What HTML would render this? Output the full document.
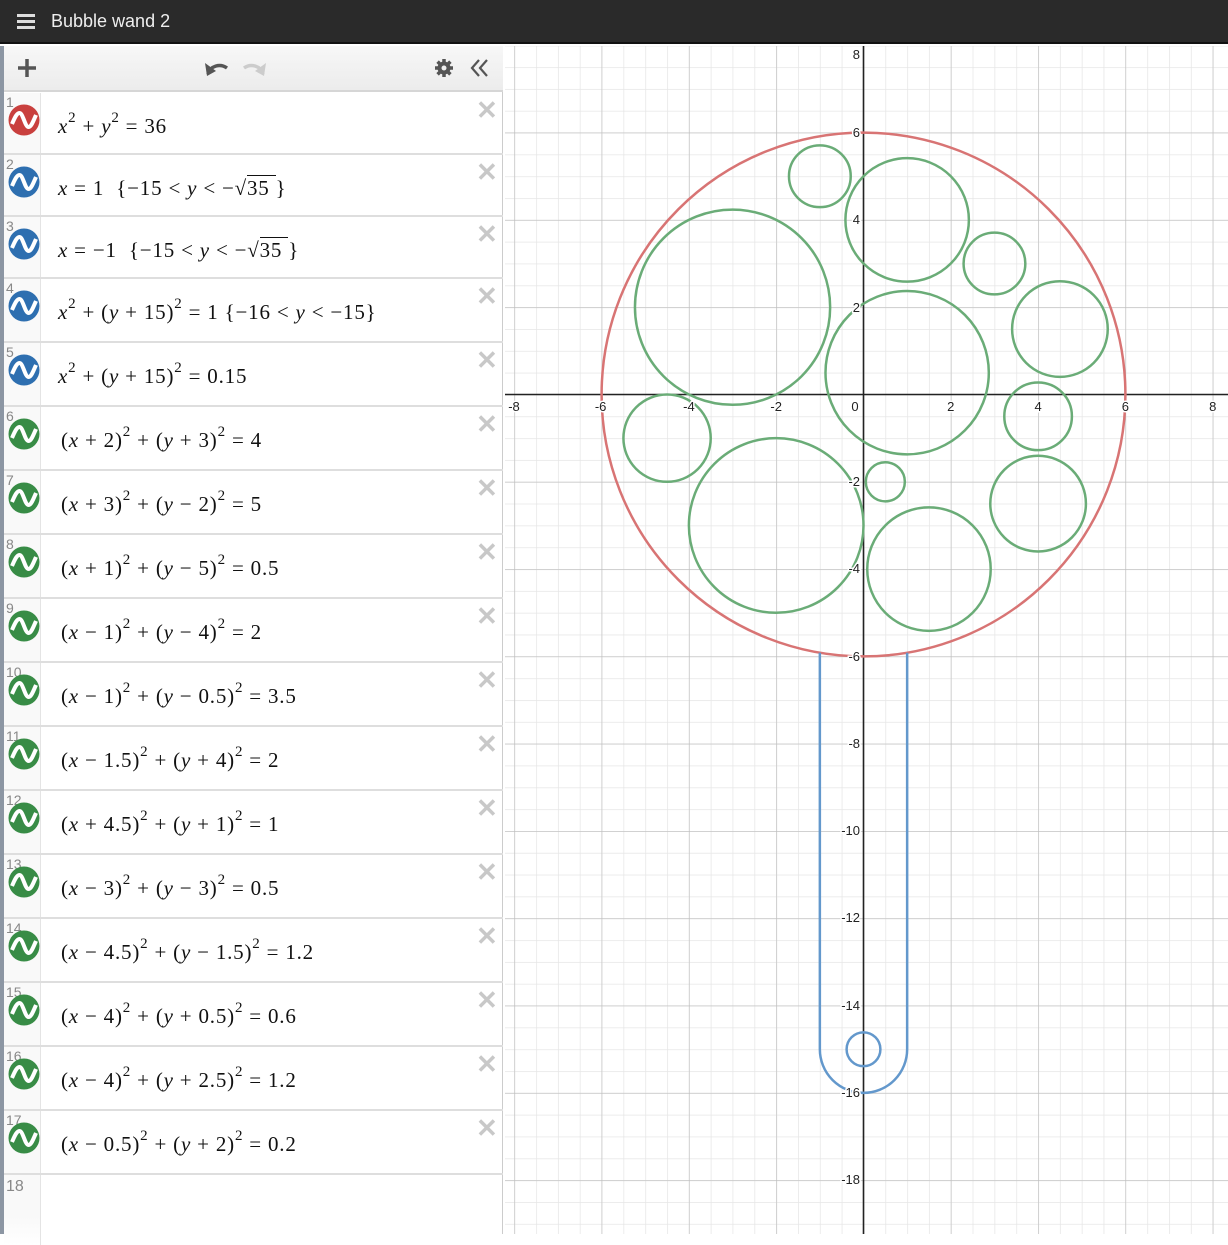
<!DOCTYPE html>
<html><head><meta charset="utf-8"><style>
*{margin:0;padding:0;box-sizing:border-box}
body{width:1228px;height:1234px;overflow:hidden;background:#fff;position:relative;font-family:"Liberation Sans",sans-serif}
#top{position:absolute;left:0;top:0;width:1228px;height:44px;background:#2a2a2a;border-bottom:2px solid #111}
#top .t{position:absolute;left:51px;top:11px;color:#eee;font-size:18px}
#top .hb{position:absolute;left:17px;top:14px;width:18px;height:3px;background:#ddd;box-shadow:0 6px 0 #ddd,0 12px 0 #ddd}
#strip{position:absolute;left:0;top:46px;width:4px;height:1188px;background:#8c96a3}
#panel{position:absolute;left:4px;top:46px;width:499px;height:1188px;background:#fff;border-right:1px solid #ccc}
#tool{position:absolute;left:0;top:0;width:499px;height:46px;background:linear-gradient(#f7f7f7,#ececec);border-bottom:2px solid #d6d6d6}
.row{position:absolute;left:0;width:499px;border-bottom:2px solid #dedede}
.ic{position:absolute;left:0;top:0;width:37px;height:100%;background:#f9f9f9;border-right:1px solid #e4e4e4}
.num{position:absolute;left:2px;top:1px;font-size:14px;color:#888}
.ico{position:absolute;left:4px;top:11px}
.m{position:absolute;top:21px;font-family:"Liberation Serif",serif;font-size:21px;letter-spacing:0.8px;color:#111;white-space:nowrap}
.m i{font-style:italic}
.m sup{font-size:15px;vertical-align:11px;line-height:0}
.x{position:absolute;left:472px;top:4px;color:#c8c8c8;font-size:26px;font-weight:bold;line-height:1}
</style></head><body>
<svg width="1228" height="1234" style="position:absolute;left:0;top:0">
<defs>
<pattern id="mn" x="863.5" y="394.5" width="21.825" height="21.825" patternUnits="userSpaceOnUse"><path d="M0 0V21.825M0 0H21.825" stroke="#e6e6e6" stroke-width="1.5" fill="none"/></pattern>
<pattern id="mj" x="863.5" y="394.5" width="87.3" height="87.3" patternUnits="userSpaceOnUse"><path d="M0 0V87.3M0 0H87.3" stroke="#bdbdbd" stroke-width="1.2" fill="none"/></pattern>
</defs>
<rect x="505" y="46" width="723" height="1188" fill="url(#mn)"/>
<rect x="505" y="46" width="723" height="1188" fill="url(#mj)"/>
<line x1="863.5" y1="46" x2="863.5" y2="1234" stroke="#222" stroke-width="1.6"/>
<line x1="505" y1="394.5" x2="1228" y2="394.5" stroke="#222" stroke-width="1.6"/>
<g fill="none" stroke-width="2.5">
<circle cx="863.5" cy="394.5" r="261.9" stroke="#d87474"/>
<g stroke="#6aac77">
<circle cx="776.2" cy="525.45" r="87.3"/>
<circle cx="732.55" cy="307.2" r="97.6"/>
<circle cx="819.85" cy="176.25" r="30.87"/>
<circle cx="907.15" cy="219.9" r="61.73"/>
<circle cx="907.15" cy="372.675" r="81.66"/>
<circle cx="928.975" cy="569.1" r="61.73"/>
<circle cx="667.075" cy="438.15" r="43.65"/>
<circle cx="994.45" cy="263.55" r="30.87"/>
<circle cx="1059.925" cy="329.025" r="47.82"/>
<circle cx="1038.1" cy="416.325" r="33.81"/>
<circle cx="1038.1" cy="503.625" r="47.82"/>
<circle cx="885.325" cy="481.8" r="19.52"/>
</g>
<g stroke="#6398cc">
<path d="M819.85 652.7 L819.85 1049.25 A43.65 43.65 0 0 0 907.15 1049.25 L907.15 652.7"/>
<circle cx="863.5" cy="1049.25" r="16.9"/>
</g>
</g>
<g font-family="Liberation Sans,sans-serif" font-size="13" fill="#222" stroke="#fff" stroke-width="3" paint-order="stroke" text-anchor="middle">
<text x="514" y="411">-8</text><text x="600.6" y="411">-6</text><text x="688.9" y="411">-4</text><text x="776.2" y="411">-2</text><text x="855" y="411">0</text><text x="950.8" y="411">2</text><text x="1038.1" y="411">4</text><text x="1125.4" y="411">6</text><text x="1212.7" y="411">8</text>
</g>
<g font-family="Liberation Sans,sans-serif" font-size="13" fill="#222" stroke="#fff" stroke-width="3" paint-order="stroke" text-anchor="end">
<text x="860" y="59">8</text><text x="860" y="137">6</text><text x="860" y="224">4</text><text x="860" y="312">2</text><text x="860" y="486">-2</text><text x="860" y="573">-4</text><text x="860" y="661">-6</text><text x="860" y="748">-8</text><text x="860" y="835">-10</text><text x="860" y="922">-12</text><text x="860" y="1010">-14</text><text x="860" y="1097">-16</text><text x="860" y="1184">-18</text>
</g>
</svg>
<div id="top"><div class="hb"></div><div class="t">Bubble wand 2</div></div>
<div id="strip"></div>
<div id="panel">
<div id="tool">
<svg width="499" height="46" style="position:absolute;left:0;top:0">
<path d="M23 13V31M14 22H32" stroke="#555" stroke-width="3.5"/>
<path d="M204 28 C206 20 216 17 223 22" stroke="#555" stroke-width="3.5" fill="none"/><path d="M201 17 L203 30 L212 25Z" fill="#555"/>
<path d="M259 28 C257 20 247 17 240 22" stroke="#ccc" stroke-width="3.5" fill="none"/><path d="M262 17 L260 30 L251 25Z" fill="#ccc"/>
<g transform="translate(440,22)" fill="#555"><circle r="6.5"/><g stroke="#555" stroke-width="3.5"><path d="M0 -9V9M-9 0H9M-6.4 -6.4L6.4 6.4M-6.4 6.4L6.4 -6.4"/></g><circle r="2.5" fill="#f0f0f0"/></g>
<path d="M475 14 L468 22 L475 30M483 14 L476 22 L483 30" stroke="#555" stroke-width="2.2" fill="none"/>
</svg>
</div>
</div>
<div style="position:absolute;left:4px;top:93px;width:499px">
<div class="row" style="top:0;height:62px"><div class="ic"></div><div class="num">1</div><svg class="ico" width="32" height="32"><circle cx="16" cy="16" r="15.5" fill="#c9403e"/><path d="M4 20 C7 13 9 9 11.5 9 C15 9 17 23 20.5 23 C23 23 25 18 28 11" stroke="#fff" stroke-width="4" fill="none"/></svg><div class="m" style="left:54px"><i>x</i><sup>2</sup> + <i>y</i><sup>2</sup> = 36</div><div class="x">✕</div></div>
<div class="row" style="top:62px;height:62px"><div class="ic"></div><div class="num">2</div><svg class="ico" width="32" height="32"><circle cx="16" cy="16" r="15.5" fill="#2e6fb0"/><path d="M4 20 C7 13 9 9 11.5 9 C15 9 17 23 20.5 23 C23 23 25 18 28 11" stroke="#fff" stroke-width="4" fill="none"/></svg><div class="m" style="left:54px"><i>x</i> = 1 &nbsp;{−15 &lt; <i>y</i> &lt; −√<span style="border-top:1.5px solid #111">35 </span>}</div><div class="x">✕</div></div>
<div class="row" style="top:124px;height:62px"><div class="ic"></div><div class="num">3</div><svg class="ico" width="32" height="32"><circle cx="16" cy="16" r="15.5" fill="#2e6fb0"/><path d="M4 20 C7 13 9 9 11.5 9 C15 9 17 23 20.5 23 C23 23 25 18 28 11" stroke="#fff" stroke-width="4" fill="none"/></svg><div class="m" style="left:54px"><i>x</i> = −1 &nbsp;{−15 &lt; <i>y</i> &lt; −√<span style="border-top:1.5px solid #111">35 </span>}</div><div class="x">✕</div></div>
<div class="row" style="top:186px;height:64px"><div class="ic"></div><div class="num">4</div><svg class="ico" width="32" height="32"><circle cx="16" cy="16" r="15.5" fill="#2e6fb0"/><path d="M4 20 C7 13 9 9 11.5 9 C15 9 17 23 20.5 23 C23 23 25 18 28 11" stroke="#fff" stroke-width="4" fill="none"/></svg><div class="m" style="left:54px"><i>x</i><sup>2</sup> + (<i>y</i> + 15)<sup>2</sup> = 1 {−16 &lt; <i>y</i> &lt; −15}</div><div class="x">✕</div></div>
<div class="row" style="top:250px;height:64px"><div class="ic"></div><div class="num">5</div><svg class="ico" width="32" height="32"><circle cx="16" cy="16" r="15.5" fill="#2e6fb0"/><path d="M4 20 C7 13 9 9 11.5 9 C15 9 17 23 20.5 23 C23 23 25 18 28 11" stroke="#fff" stroke-width="4" fill="none"/></svg><div class="m" style="left:54px"><i>x</i><sup>2</sup> + (<i>y</i> + 15)<sup>2</sup> = 0.15</div><div class="x">✕</div></div>
<div class="row" style="top:314px;height:64px"><div class="ic"></div><div class="num">6</div><svg class="ico" width="32" height="32"><circle cx="16" cy="16" r="15.5" fill="#388c46"/><path d="M4 20 C7 13 9 9 11.5 9 C15 9 17 23 20.5 23 C23 23 25 18 28 11" stroke="#fff" stroke-width="4" fill="none"/></svg><div class="m" style="left:57px">(<i>x</i> + 2)<sup>2</sup> + (<i>y</i> + 3)<sup>2</sup> = 4</div><div class="x">✕</div></div>
<div class="row" style="top:378px;height:64px"><div class="ic"></div><div class="num">7</div><svg class="ico" width="32" height="32"><circle cx="16" cy="16" r="15.5" fill="#388c46"/><path d="M4 20 C7 13 9 9 11.5 9 C15 9 17 23 20.5 23 C23 23 25 18 28 11" stroke="#fff" stroke-width="4" fill="none"/></svg><div class="m" style="left:57px">(<i>x</i> + 3)<sup>2</sup> + (<i>y</i> − 2)<sup>2</sup> = 5</div><div class="x">✕</div></div>
<div class="row" style="top:442px;height:64px"><div class="ic"></div><div class="num">8</div><svg class="ico" width="32" height="32"><circle cx="16" cy="16" r="15.5" fill="#388c46"/><path d="M4 20 C7 13 9 9 11.5 9 C15 9 17 23 20.5 23 C23 23 25 18 28 11" stroke="#fff" stroke-width="4" fill="none"/></svg><div class="m" style="left:57px">(<i>x</i> + 1)<sup>2</sup> + (<i>y</i> − 5)<sup>2</sup> = 0.5</div><div class="x">✕</div></div>
<div class="row" style="top:506px;height:64px"><div class="ic"></div><div class="num">9</div><svg class="ico" width="32" height="32"><circle cx="16" cy="16" r="15.5" fill="#388c46"/><path d="M4 20 C7 13 9 9 11.5 9 C15 9 17 23 20.5 23 C23 23 25 18 28 11" stroke="#fff" stroke-width="4" fill="none"/></svg><div class="m" style="left:57px">(<i>x</i> − 1)<sup>2</sup> + (<i>y</i> − 4)<sup>2</sup> = 2</div><div class="x">✕</div></div>
<div class="row" style="top:570px;height:64px"><div class="ic"></div><div class="num">10</div><svg class="ico" width="32" height="32"><circle cx="16" cy="16" r="15.5" fill="#388c46"/><path d="M4 20 C7 13 9 9 11.5 9 C15 9 17 23 20.5 23 C23 23 25 18 28 11" stroke="#fff" stroke-width="4" fill="none"/></svg><div class="m" style="left:57px">(<i>x</i> − 1)<sup>2</sup> + (<i>y</i> − 0.5)<sup>2</sup> = 3.5</div><div class="x">✕</div></div>
<div class="row" style="top:634px;height:64px"><div class="ic"></div><div class="num">11</div><svg class="ico" width="32" height="32"><circle cx="16" cy="16" r="15.5" fill="#388c46"/><path d="M4 20 C7 13 9 9 11.5 9 C15 9 17 23 20.5 23 C23 23 25 18 28 11" stroke="#fff" stroke-width="4" fill="none"/></svg><div class="m" style="left:57px">(<i>x</i> − 1.5)<sup>2</sup> + (<i>y</i> + 4)<sup>2</sup> = 2</div><div class="x">✕</div></div>
<div class="row" style="top:698px;height:64px"><div class="ic"></div><div class="num">12</div><svg class="ico" width="32" height="32"><circle cx="16" cy="16" r="15.5" fill="#388c46"/><path d="M4 20 C7 13 9 9 11.5 9 C15 9 17 23 20.5 23 C23 23 25 18 28 11" stroke="#fff" stroke-width="4" fill="none"/></svg><div class="m" style="left:57px">(<i>x</i> + 4.5)<sup>2</sup> + (<i>y</i> + 1)<sup>2</sup> = 1</div><div class="x">✕</div></div>
<div class="row" style="top:762px;height:64px"><div class="ic"></div><div class="num">13</div><svg class="ico" width="32" height="32"><circle cx="16" cy="16" r="15.5" fill="#388c46"/><path d="M4 20 C7 13 9 9 11.5 9 C15 9 17 23 20.5 23 C23 23 25 18 28 11" stroke="#fff" stroke-width="4" fill="none"/></svg><div class="m" style="left:57px">(<i>x</i> − 3)<sup>2</sup> + (<i>y</i> − 3)<sup>2</sup> = 0.5</div><div class="x">✕</div></div>
<div class="row" style="top:826px;height:64px"><div class="ic"></div><div class="num">14</div><svg class="ico" width="32" height="32"><circle cx="16" cy="16" r="15.5" fill="#388c46"/><path d="M4 20 C7 13 9 9 11.5 9 C15 9 17 23 20.5 23 C23 23 25 18 28 11" stroke="#fff" stroke-width="4" fill="none"/></svg><div class="m" style="left:57px">(<i>x</i> − 4.5)<sup>2</sup> + (<i>y</i> − 1.5)<sup>2</sup> = 1.2</div><div class="x">✕</div></div>
<div class="row" style="top:890px;height:64px"><div class="ic"></div><div class="num">15</div><svg class="ico" width="32" height="32"><circle cx="16" cy="16" r="15.5" fill="#388c46"/><path d="M4 20 C7 13 9 9 11.5 9 C15 9 17 23 20.5 23 C23 23 25 18 28 11" stroke="#fff" stroke-width="4" fill="none"/></svg><div class="m" style="left:57px">(<i>x</i> − 4)<sup>2</sup> + (<i>y</i> + 0.5)<sup>2</sup> = 0.6</div><div class="x">✕</div></div>
<div class="row" style="top:954px;height:64px"><div class="ic"></div><div class="num">16</div><svg class="ico" width="32" height="32"><circle cx="16" cy="16" r="15.5" fill="#388c46"/><path d="M4 20 C7 13 9 9 11.5 9 C15 9 17 23 20.5 23 C23 23 25 18 28 11" stroke="#fff" stroke-width="4" fill="none"/></svg><div class="m" style="left:57px">(<i>x</i> − 4)<sup>2</sup> + (<i>y</i> + 2.5)<sup>2</sup> = 1.2</div><div class="x">✕</div></div>
<div class="row" style="top:1018px;height:64px"><div class="ic"></div><div class="num">17</div><svg class="ico" width="32" height="32"><circle cx="16" cy="16" r="15.5" fill="#388c46"/><path d="M4 20 C7 13 9 9 11.5 9 C15 9 17 23 20.5 23 C23 23 25 18 28 11" stroke="#fff" stroke-width="4" fill="none"/></svg><div class="m" style="left:57px">(<i>x</i> − 0.5)<sup>2</sup> + (<i>y</i> + 2)<sup>2</sup> = 0.2</div><div class="x">✕</div></div>
<div class="row" style="top:1082px;height:70px;border-bottom:none"><div class="ic" style="background:linear-gradient(#f9f9f9 60%,#fff)"></div><div class="num" style="top:3px;font-size:16px">18</div></div>
</div>
</body></html>
